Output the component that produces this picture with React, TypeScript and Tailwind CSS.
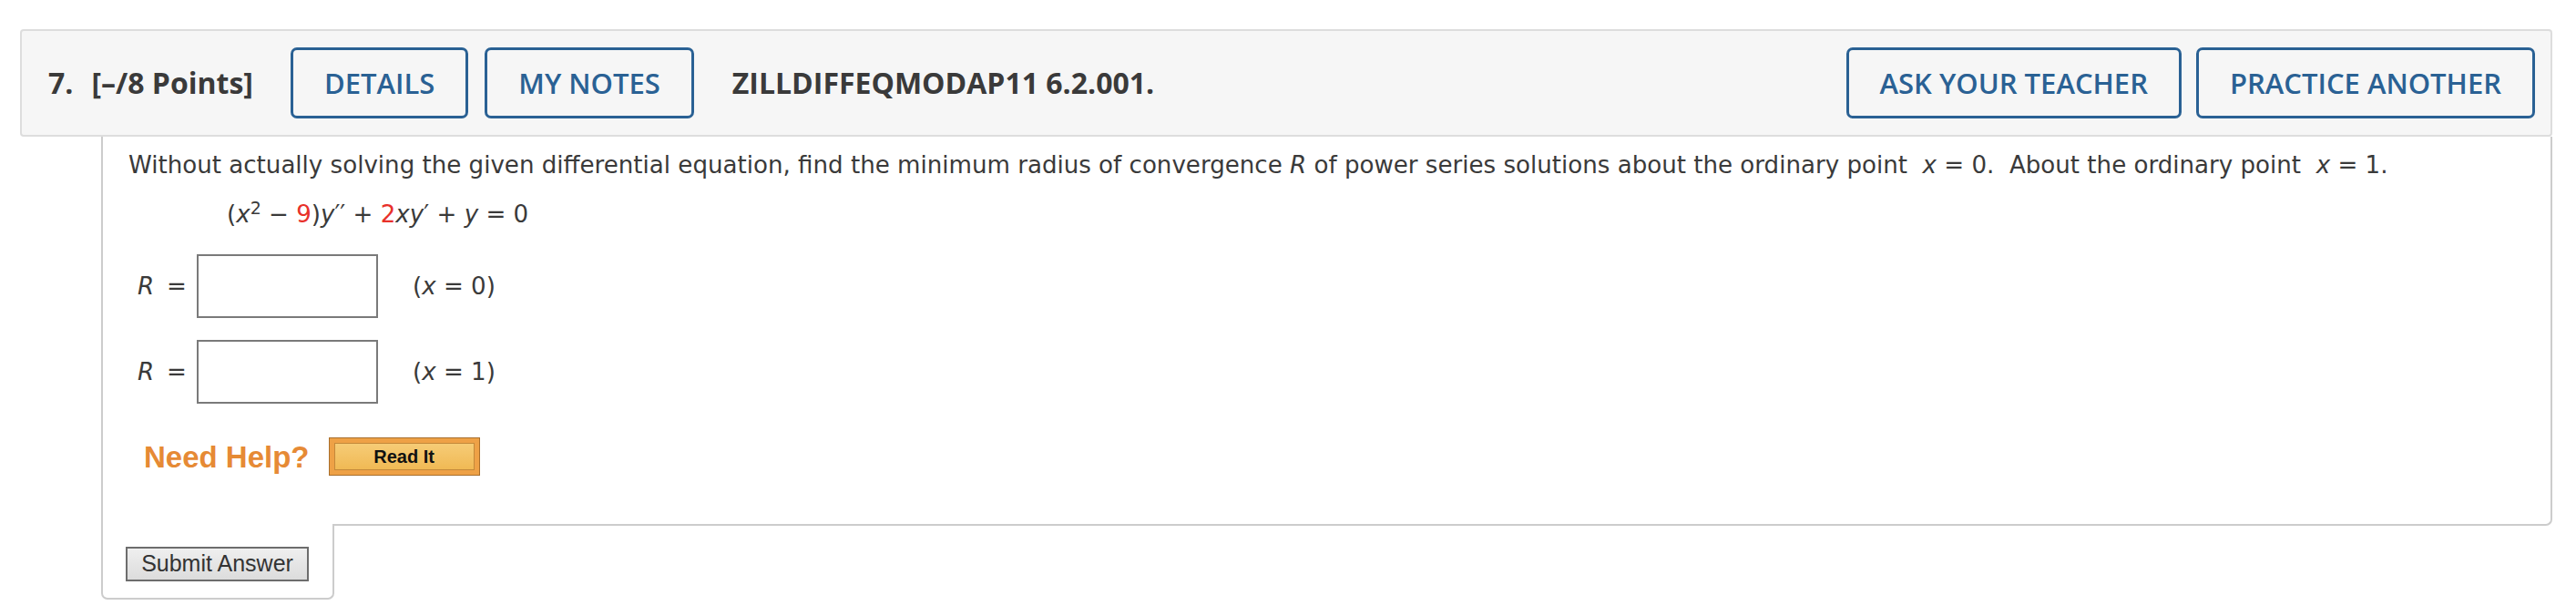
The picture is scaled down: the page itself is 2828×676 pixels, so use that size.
import React from "react";

const Red = ({ children }: { children: React.ReactNode }) => (
  <span className="text-[#e8312a]">{children}</span>
);

const V = ({ children }: { children: React.ReactNode }) => <i>{children}</i>;

function HeaderButton({ label }: { label: string }) {
  return (
    <div className="flex h-[78px] items-center rounded-[7px] border-[3px] border-[#2a6194] px-[34px] text-[31px] font-semibold text-[#2a6194]">
      {label}
    </div>
  );
}

function AnswerRow({ point }: { point: string }) {
  return (
    <div className="flex items-center">
      <span className="w-[32px]">
        <V>R</V>
      </span>
      <span className="w-[33px]">=</span>
      <div className="h-[70px] w-[199px] border-2 border-[#7a7a7a] bg-white" />
      <span className="ml-[38px]">
        (<V>x</V> = {point})
      </span>
    </div>
  );
}

export default function App() {
  return (
    <div className="min-h-[676px] w-[2828px] bg-white pt-[32px]">
      {/* Header */}
      <div
        className="ml-[22px] mr-[26px] flex h-[118px] items-center rounded-[4px] border-2 border-[#dddddd] bg-[#f6f6f6] pl-[29px] pr-[17px] text-[#3a3a3a]"
        style={{ fontFamily: '"Open Sans", sans-serif' }}
      >
        <span className="text-[32px] font-bold">7.</span>
        <span className="ml-[20px] text-[32px] font-bold">[–/8 Points]</span>
        <div className="ml-[41px] flex gap-[18px]">
          <HeaderButton label="DETAILS" />
          <HeaderButton label="MY NOTES" />
        </div>
        <span className="ml-[42px] text-[32px] font-bold">ZILLDIFFEQMODAP11 6.2.001.</span>
        <div className="ml-auto flex gap-[16px]">
          <HeaderButton label="ASK YOUR TEACHER" />
          <HeaderButton label="PRACTICE ANOTHER" />
        </div>
      </div>

      {/* Body */}
      <div className="ml-[111px] mr-[26px]">
        <div
          className="rounded-br-[7px] border-x-2 border-b-2 border-[#cccccc] pb-[53px] pl-[28px] pt-[15px] text-[26.1px] leading-[33px] text-[#3a3a3a]"
          style={{ fontFamily: '"DejaVu Sans", Verdana, sans-serif' }}
        >
          <p>
            Without actually solving the given differential equation, find the minimum radius of
            convergence <V>R</V> of power series solutions about the ordinary point&nbsp; <V>x</V> = 0.&nbsp; About
            the ordinary point&nbsp; <V>x</V> = 1.
          </p>
          <p className="ml-[108px] mt-[21px]">
            (<V>x</V>
            <sup className="text-[19px]">2</sup> − <Red>9</Red>)<V>y</V>′′ + <Red>2</Red>
            <V>xy</V>′ + <V>y</V> = 0
          </p>
          <div className="ml-[10px] mt-[27px] flex flex-col gap-[24px]">
            <AnswerRow point="0" />
            <AnswerRow point="1" />
          </div>
          <div className="ml-[17px] mt-[37px] flex items-center">
            <span
              className="text-[33px] font-bold text-[#e68a35]"
              style={{ fontFamily: '"Liberation Sans", Arial, sans-serif' }}
            >
              Need Help?
            </span>
            <div className="ml-[21px] flex h-[42px] w-[166px] items-center justify-center border border-[#a86e2c] bg-[#eea146] p-[5px]">
              <div
                className="flex h-full w-full items-center justify-center border border-[#c4893a] bg-gradient-to-b from-[#f6cc76] to-[#f0b954] text-[20px] font-bold leading-none text-[#111]"
                style={{ fontFamily: '"Liberation Sans", Arial, sans-serif' }}
              >
                Read It
              </div>
            </div>
          </div>
        </div>
        <div className="-mt-[2px] h-[83px] w-[256px] rounded-b-[7px] border-x-2 border-b-2 border-[#cccccc] bg-white pl-[25px] pt-[25px]">
          <div
            className="flex h-[38px] w-[201px] items-center justify-center border-2 border-[#6d6d6d] bg-gradient-to-b from-[#efefef] to-[#dcdcdc] text-[25px] text-[#333]"
            style={{ fontFamily: '"Liberation Sans", Arial, sans-serif' }}
          >
            Submit Answer
          </div>
        </div>
      </div>
    </div>
  );
}
